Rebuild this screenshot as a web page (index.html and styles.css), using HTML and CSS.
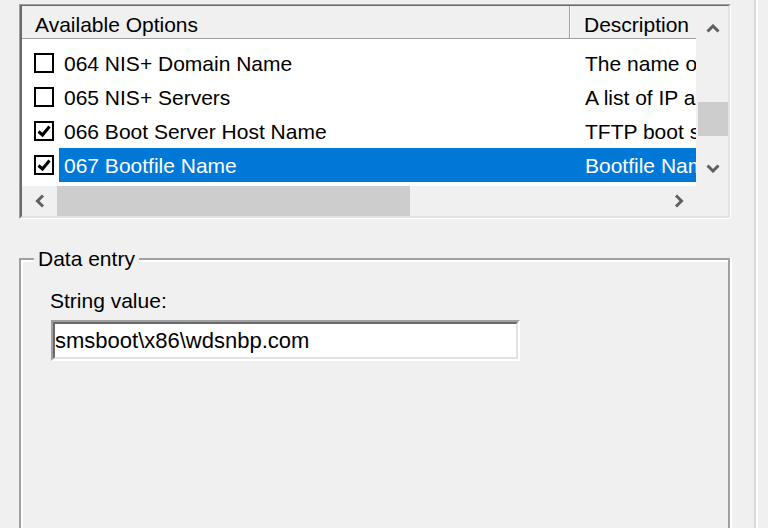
FILE: index.html
```html
<!DOCTYPE html>
<html lang="en">
<head>
  <meta charset="UTF-8" />
  <meta name="viewport" content="width=device-width, initial-scale=1.0" />
  <title>Scope Options</title>
  <link rel="stylesheet" href="styles.css">
</head>
<body>
  <div class="panel">

    <!-- options list -->
    <div class="listview">
      <div class="lv-inner">
        <div class="lv-list">
          <div class="lv-header">
            <div class="col-name">Available Options</div>
            <div class="col-desc">Description</div>
          </div>
          <div class="lv-rows">
            <div class="row">
              <span class="check-zone"><span class="check"></span></span>
              <span class="cell-name">064 NIS+ Domain Name</span>
              <span class="cell-desc">The name of the client's NIS+ domain.</span>
            </div>
            <div class="row">
              <span class="check-zone"><span class="check"></span></span>
              <span class="cell-name">065 NIS+ Servers</span>
              <span class="cell-desc">A list of IP addresses indicating NIS+ servers</span>
            </div>
            <div class="row">
              <span class="check-zone">
                <span class="check">
                  <svg viewBox="0 0 16 16" width="16" height="16"><path d="M2.5 8.5 L6.5 12 L13.5 3.5" fill="none" stroke="#000" stroke-width="3"/></svg>
                </span>
              </span>
              <span class="cell-name">066 Boot Server Host Name</span>
              <span class="cell-desc">TFTP boot server host name</span>
            </div>
            <div class="row selected">
              <span class="check-zone">
                <span class="check">
                  <svg viewBox="0 0 16 16" width="16" height="16"><path d="M2.5 8.5 L6.5 12 L13.5 3.5" fill="none" stroke="#000" stroke-width="3"/></svg>
                </span>
              </span>
              <span class="cell-name">067 Bootfile Name</span>
              <span class="cell-desc">Bootfile Name</span>
            </div>
          </div>
        </div>

        <div class="vscroll">
          <div class="vs-btn vs-up">
            <svg viewBox="0 0 14 9" width="14" height="9"><polyline points="1.5,7.5 7,2 12.5,7.5" fill="none" stroke="#606060" stroke-width="3"/></svg>
          </div>
          <div class="vs-track"><div class="vs-thumb"></div></div>
          <div class="vs-btn vs-down">
            <svg viewBox="0 0 14 9" width="14" height="9"><polyline points="1.5,1.5 7,7 12.5,1.5" fill="none" stroke="#606060" stroke-width="3"/></svg>
          </div>
        </div>

        <div class="hscroll">
          <div class="hs-btn hs-left">
            <svg viewBox="0 0 10 14" width="10" height="14"><polyline points="8,1.5 2.5,7 8,12.5" fill="none" stroke="#606060" stroke-width="3"/></svg>
          </div>
          <div class="hs-track"><div class="hs-thumb"></div></div>
          <div class="hs-btn hs-right">
            <svg viewBox="0 0 10 14" width="10" height="14"><polyline points="2,1.5 7.5,7 2,12.5" fill="none" stroke="#606060" stroke-width="3"/></svg>
          </div>
        </div>

        <div class="corner"></div>
      </div>
    </div>

    <!-- data entry -->
    <fieldset class="group">
      <legend>Data entry</legend>
      <div class="group-body">
        <div class="field-label">String value:</div>
        <div class="field">
          <div class="field-input">smsboot\x86\wdsnbp.com</div>
        </div>
      </div>
    </fieldset>

  </div>
</body>
</html>
```

FILE: styles.css
```css
* {
  box-sizing: border-box;
}

body {
  margin: 0;
  background-color: #f0f0f0;
  font-family: "Liberation Sans", Arial, sans-serif;
  font-size: 21px;
  color: #000;
  overflow: hidden;
}

.panel {
  width: 756px;
  height: 528px;
  padding: 4px 0 0 19px;
  border-right: 2px solid #dadada;
  box-shadow: 2px 0 0 #fff;
  overflow: hidden;
}

/* list view */
.listview {
  width: 712px;
  height: 215px;
  border: 1px solid;
  border-color: #a0a0a0 #fff #fff #a0a0a0;
}

.lv-inner {
  height: 100%;
  border-style: solid;
  border-width: 1px 2px 2px 2px;
  border-color: #696969 #e3e3e3 #e3e3e3 #696969;
  display: grid;
  grid-template-columns: 1fr 32px;
  grid-template-rows: 1fr 30px;
  background: #fff;
}

.lv-list {
  overflow: hidden;
  background: #fff;
}

.lv-header {
  display: flex;
  height: 33px;
  background: #f0f0f0;
  border-bottom: 1px solid #a0a0a0;
}

.col-name {
  width: 548px;
  flex: none;
  padding: 6px 0 0 13px;
  line-height: 26px;
  border-right: 1px solid #a0a0a0;
  box-shadow: 1px 0 0 #fff;
  white-space: nowrap;
}

.col-desc {
  flex: 1;
  min-width: 0;
  padding: 6px 0 0 14px;
  line-height: 26px;
  white-space: nowrap;
  overflow: hidden;
}

.lv-rows {
  padding-top: 7px;
}

.row {
  display: flex;
  height: 34px;
}

.check-zone {
  width: 37px;
  flex: none;
  display: flex;
  align-items: center;
}

.check {
  margin-left: 12px;
  width: 20px;
  height: 20px;
  border: 2px solid #000;
  background: #fff;
  display: flex;
  align-items: center;
  justify-content: center;
}

.cell-name,
.cell-desc {
  padding-top: 2px;
  line-height: 32px;
  white-space: nowrap;
  overflow: hidden;
}

.cell-name {
  width: 511px;
  flex: none;
  padding-left: 5px;
}

.cell-desc {
  flex: 1;
  min-width: 0;
  padding-left: 15px;
}

.row.selected .cell-name,
.row.selected .cell-desc {
  background-color: #0078d7;
  color: #fff;
}

/* scroll bars */
.vscroll {
  background: #f0f0f0;
  display: flex;
  flex-direction: column;
}

.vs-btn {
  display: flex;
  align-items: center;
  justify-content: center;
  padding-left: 2px;
}

.vs-up {
  height: 44px;
}

.vs-down {
  height: 36px;
}

.vs-track {
  flex: 1;
}

.vs-thumb {
  margin: 52px 0 0 2px;
  height: 34px;
  background: #cdcdcd;
}

.hscroll {
  background: #f0f0f0;
  display: flex;
}

.hs-btn {
  flex: none;
  display: flex;
  align-items: center;
  justify-content: center;
}

.hs-left {
  width: 35px;
}

.hs-right {
  width: 34px;
}

.hs-track {
  flex: 1;
}

.hs-thumb {
  width: 353px;
  height: 100%;
  background: #cdcdcd;
}

.corner {
  background: #f0f0f0;
}

svg {
  display: block;
}

/* group box */
.group {
  margin: 28px 0 0 0;
  padding: 0;
  width: 711px;
  height: 320px;
  border: 2px solid #a0a0a0;
  box-shadow: inset 2px 2px 0 #fff, 2px 0 0 #fff;
  min-inline-size: 0;
}

.group legend {
  margin-left: 13px;
  padding: 0 4px;
  line-height: 24px;
  background: #f0f0f0;
}

.group-body {
  padding: 18px 0 0 29px;
}

.field-label {
  line-height: 24px;
}

.field {
  margin: 7px 0 0 1px;
  width: 469px;
  height: 41px;
  border: 2px solid;
  border-color: #a0a0a0 #fff #fff #a0a0a0;
}

.field-input {
  height: 100%;
  border: 2px solid;
  border-color: #696969 #e3e3e3 #e3e3e3 #696969;
  background: #fff;
  font-size: 22px;
  line-height: 33px;
  white-space: nowrap;
  overflow: hidden;
}
```
